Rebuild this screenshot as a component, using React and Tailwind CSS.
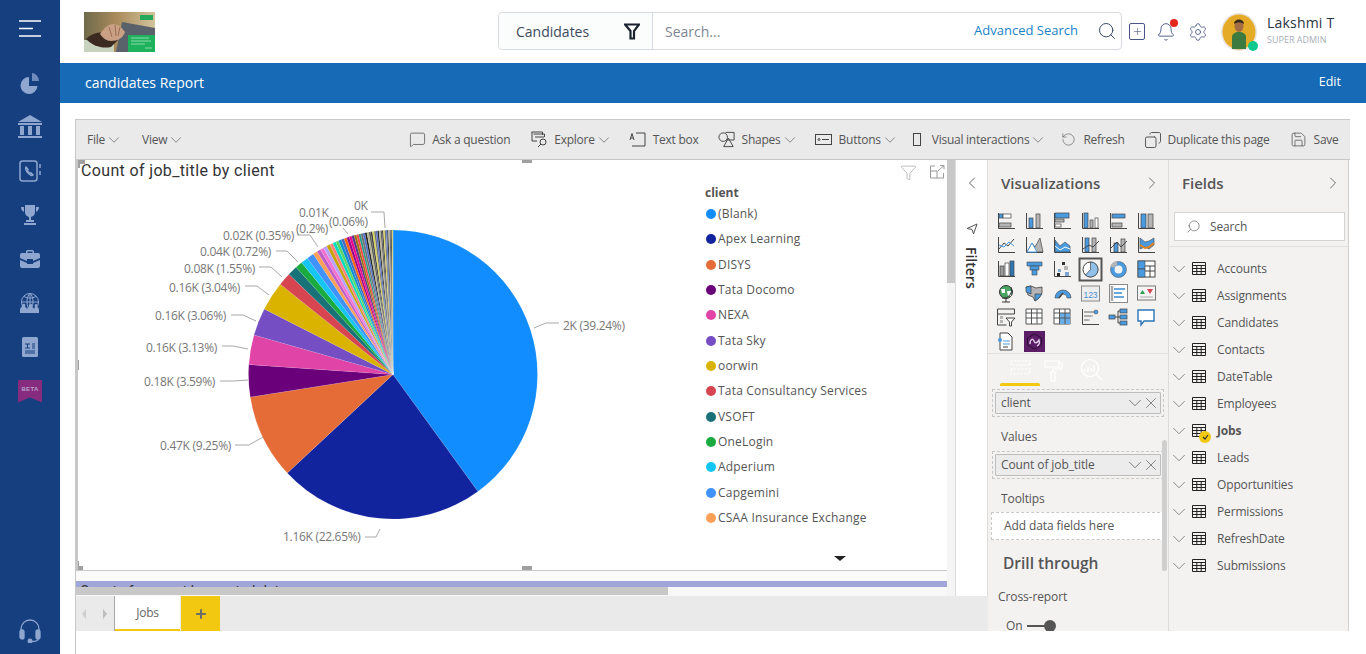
import { ChevronDown, ChevronLeft, ChevronRight, X, Search, Filter, Bell, Settings, MessageSquare, Copy, Save, RotateCw, Plus } from "lucide-react";

const font = "font-['Open_Sans','Noto_Sans',sans-serif]";

const palette = ["#BE5DC9", "#F472D0", "#B5A1FF", "#C4A200", "#FF8080", "#00DBBC", "#5BD667", "#0091D5", "#4668C5", "#FF6300", "#99008A", "#EC008C", "#533285", "#99700A", "#FF4141", "#1F9A85", "#25891C", "#0057A2", "#002050", "#C94F0F", "#450F54", "#B60064", "#34124F", "#6A1604"];

const bigSlices = [
  [40, "#118DFF"], [23.06, "#12239E"], [9.44, "#E66C37"], [3.6, "#6B007B"], [3.3, "#E044A7"], [3.1, "#744EC2"], [3.25, "#D9B300"], [1.45, "#D64550"], [1.1, "#197278"], [0.8, "#1AAB40"], [0.8, "#15C6F4"], [0.8, "#4092FF"], [0.5, "#FFA058"],
];

function buildSlices() {
  const out = bigSlices.map(([v, c]) => ({ v, c, thin: false }));
  let used = out.reduce((s, x) => s + x.v, 0);
  let i = 0;
  let size = 0.42;
  while (used < 100) {
    const v = Math.min(size, 100 - used);
    const faded = used > 96.4;
    out.push({ v, c: faded ? ["#3a3a3a", "#d9d24a", "#6a6a6a", "#4668C5", "#1f1f1f", "#b5b58a", "#555555"][i % 7] : palette[i % palette.length], thin: faded });
    used += v;
    size = Math.max(0.085, size * 0.965);
    i++;
  }
  return out;
}

function PieSlices() {
  const cx = 393, cy = 374.5, r = 144.5;
  let a = 0;
  return buildSlices().map((s, i) => {
    const a1 = a + (s.v / 100) * Math.PI * 2;
    const p0 = [cx + r * Math.sin(a), cy - r * Math.cos(a)];
    const p1 = [cx + r * Math.sin(a1), cy - r * Math.cos(a1)];
    a = a1;
    return (
      <path key={i} d={`M${cx} ${cy}L${p0[0]} ${p0[1]}A${r} ${r} 0 0 1 ${p1[0]} ${p1[1]}Z`} fill={s.c} stroke="#fff" strokeWidth={s.thin ? 0.12 : 0.1} />
    );
  });
}

const labels = [
  ["2K (39.24%)", 563, 326, "534,328 546,323 559,323"],
  ["1.16K (22.65%)", 283, 537, "365,537 376,537 380,529"],
  ["0.47K (9.25%)", 160, 446, "235,445 249,445 263,437"],
  ["0.18K (3.59%)", 144, 382, "220,381 234,381 248,380"],
  ["0.16K (3.13%)", 146, 348, "222,346 233,346 248,349"],
  ["0.16K (3.06%)", 155, 316, "231,315 243,315 256,321"],
  ["0.16K (3.04%)", 169, 288, "245,286 257,286 269,295"],
  ["0.08K (1.55%)", 184, 269, "259,267 271,267 282,277"],
  ["0.04K (0.72%)", 200, 252, "276,251 287,251 298,262"],
  ["0.02K (0.35%)", 223, 236, "297,235 310,235 318,247"],
  ["0.01K", 299, 213, ""],
  ["(0.2%)", 296, 229, ""],
  ["(0.06%)", 329, 222, "343,228 348,234"],
  ["0K", 354, 206, "371,212 384,212 385,228"],
];

const legend = ["(Blank)", "Apex Learning", "DISYS", "Tata Docomo", "NEXA", "Tata Sky", "oorwin", "Tata Consultancy Services", "VSOFT", "OneLogin", "Adperium", "Capgemini", "CSAA Insurance Exchange"];
const legendColors = ["#118DFF", "#12239E", "#E66C37", "#6B007B", "#E044A7", "#744EC2", "#D9B300", "#D64550", "#197278", "#1AAB40", "#15C6F4", "#4092FF", "#FFA058"];

const fields = ["Accounts", "Assignments", "Candidates", "Contacts", "DateTable", "Employees", "Jobs", "Leads", "Opportunities", "Permissions", "RefreshDate", "Submissions"];

function TableIcon() {
  return (
    <svg width="14" height="13" viewBox="0 0 14 13" fill="none" stroke="#222" strokeWidth="1">
      <path d="M.5.5h13v12H.5zM.5 3.5h13M.5 6.500h13M.5 9.500h13M4.800 3.500v9M9.200 3.500v9" />
    </svg>
  );
}

const dk = "#444";
const bl = "#4a9ae0";
const gr = "#b5b5b5";
const Axis = () => <path d="M1.500 1v15.500H18" fill="none" stroke={dk} />;
const Bx = ({ x, y, w, h, c = bl }) => <rect x={x} y={y} width={w} height={h} fill={c} stroke={dk} strokeWidth=".7" />;
const Ln = ({ d, c = dk }) => <path d={d} fill="none" stroke={c} strokeWidth="1" />;

const vizIcons = [
  <><Axis /><Bx x="2" y="2" w="4" h="4" /><Bx x="6" y="2" w="8" h="4" c="#fff" /><Bx x="2" y="11" w="12" h="4" c={gr} /></>,
  <><Axis /><Bx x="4" y="6" w="4" h="10" /><Bx x="11" y="2" w="4" h="14" c={gr} /></>,
  <><Axis /><Bx x="2" y="1" w="14" h="5" /><Bx x="2" y="7" w="9" h="3" c={gr} /><Bx x="2" y="12" w="6" h="3" c="#fff" /></>,
  <><Axis /><Bx x="3" y="1" w="4" h="15" /><Bx x="9" y="8" w="3" h="8" c={gr} /><Bx x="14" y="6" w="3" h="10" c="#fff" /></>,
  <><Axis /><Bx x="3" y="2" w="13" h="4" /><Bx x="3" y="11" w="10" h="4" c={gr} /></>,
  <><Axis /><Bx x="4" y="2" w="5" h="14" /><Bx x="11" y="2" w="5" h="14" c={gr} /></>,
  <><Axis /><Ln d="M2 13l5-6 4 3 6-7" /><Ln d="M2 9l5 2 5-5 5 4" c={bl} /></>,
  <><Axis /><path d="M2 16l5-9 3 4 5-9 3 14z" fill={gr} stroke={dk} strokeWidth=".7" /><path d="M2 16l5-9 5 9z" fill="#fff" stroke={bl} /></>,
  <><Axis /><path d="M2 4l5 6 5-4 5 4v6H2z" fill={bl} stroke={dk} strokeWidth=".6" /><path d="M2 10l5 4 5-3 5 2" fill="none" stroke="#fff" /></>,
  <><Axis /><Bx x="4" y="2" w="4" h="14" /><Bx x="11" y="2" w="4" h="14" c={gr} /><Ln d="M2 13l6-4 4 2 6-6" /></>,
  <><Axis /><Bx x="5" y="7" w="4" h="9" /><Bx x="12" y="3" w="4" h="13" c={gr} /><Ln d="M2 12l6-6 4 5 6-6" /></>,
  <><Axis /><path d="M3 2l5 4 4-1 5-3v7l-5 4-4-2-5 2z" fill={bl} stroke={dk} strokeWidth=".6" /><path d="M3 9l5 3 4-1 5-4" fill="none" stroke="#e6801e" strokeWidth="2" /></>,
  <><Axis /><Bx x="3" y="6" w="4" h="10" c="#999" /><Bx x="8" y="3" w="4" h="13" c="#fff" /><Bx x="13" y="1" w="4" h="15" c="#2e75b6" /></>,
  <><path d="M2 2h15v4H2z" fill={bl} stroke={dk} strokeWidth=".6" /><path d="M5 6h9v4H5z" fill={bl} stroke={dk} strokeWidth=".6" /><path d="M7 10h5v5H7z" fill={bl} stroke={dk} strokeWidth=".6" /></>,
  <><Axis /><rect x="5" y="9" width="3" height="3" fill="#7aa6d0" /><rect x="11" y="6" width="4" height="4" fill={gr} /><rect x="4" y="13" width="3" height="3" fill="#222" /><rect x="12" y="12" width="4" height="4" fill="#7aa6d0" /><rect x="9" y="2" width="3" height="3" fill="#333" /></>,
  <><rect x="-1.500" y="-1.500" width="22" height="22" fill="none" stroke="#555" strokeWidth="2" /><circle cx="9.500" cy="9.500" r="7.500" fill="#fff" stroke={dk} /><path d="M9.500 2a7.500 7.500 0 0 1 0 15 7 7 0 0 1-5-2l5-5.500z" fill="#8fc0ea" stroke={dk} strokeWidth=".7" /></>,
  <><circle cx="9.500" cy="9.500" r="6" fill="none" stroke={bl} strokeWidth="4" /><circle cx="9.500" cy="9.500" r="8" fill="none" stroke={dk} strokeWidth=".5" /><path d="M3 7a7 7 0 0 1 5-4" stroke={gr} strokeWidth="4" fill="none" /></>,
  <><rect x="1" y="1" width="17" height="16" fill="#fff" stroke={dk} /><rect x="1" y="1" width="7" height="8" fill={bl} stroke={dk} strokeWidth=".6" /><rect x="1" y="9" width="7" height="8" fill={bl} stroke={dk} strokeWidth=".6" /><path d="M8 6h10M13 6v11M8 11h10" stroke={dk} /></>,
  <><circle cx="9" cy="8" r="6.500" fill="#4aa564" stroke="#333" /><path d="M4 5h4v4H5zM10 7h4v5h-3z" fill="#fff" /><path d="M14 3a8 8 0 0 1-9 11M9 15v3M5 18h8" fill="none" stroke="#333" /></>,
  <><path d="M1 3l5-1 5 2 6-1v6l-3 5-4 3-2-4-5-2z" fill={gr} stroke={dk} strokeWidth=".8" /><path d="M1 3l5-1v8L1 8zM10 10h7l-3 4-4 3z" fill={bl} stroke={dk} strokeWidth=".7" /></>,
  <><path d="M2 14a8 8 0 0 1 16 0h-4a4 4 0 0 0-8 0z" fill={bl} stroke={dk} strokeWidth=".6" /><path d="M6 14l4-5" stroke={dk} strokeWidth="1.400" /></>,
  <><rect x="0.500" y="2" width="18" height="15" fill="#ededed" stroke="#888" /><text x="9.500" y="14" textAnchor="middle" fontSize="8.500" fill="#4a8fd0" fontFamily="Liberation Sans">123</text></>,
  <><rect x="0.500" y="0.500" width="18" height="18" fill="#fff" stroke="#888" /><path d="M3 2v15" stroke="#aaa" strokeWidth="2.500" /><path d="M5 5h11M5 9h8M5 13h10" stroke="#3c8ad0" strokeWidth="1.600" /></>,
  <><rect x="0.500" y="2" width="18" height="14" fill="#f4f4f4" stroke="#777" /><path d="M3 10l2.500-4L8 10z" fill="#2a9d4a" /><path d="M10 5h6l-3 5z" fill="#d9434f" /><path d="M3 13h13" stroke="#aaa" /></>,
  <><path d="M.5 1h17v5H.5zM.5 6v11h9" fill="none" stroke={dk} /><rect x="3" y="8" width="3" height="3" fill={gr} /><rect x="3" y="12" width="3" height="3" fill={gr} /><path d="M9 10h9l-3.500 4v4h-2v-4z" fill="#fff" stroke={dk} /></>,
  <><path d="M1 1h16v15H1zM1 5h16M1 10h16M6.500 1v15M12 1v15" fill="#fff" stroke="#555" /></>,
  <><path d="M1 1h16v15H1z" fill="#fff" stroke="#555" /><path d="M7 5h10v11H7z" fill="#6aaee8" /><path d="M1 5h16M1 10h16M6.500 1v15M12 1v15" stroke="#555" /></>,
  <><Axis /><path d="M3 4h11M3 8h7M3 12h4" stroke="#666" /><circle cx="15" cy="4" r="2" fill={bl} stroke={dk} strokeWidth=".5" /><circle cx="11" cy="8" r="1" fill={gr} /><circle cx="8" cy="12" r="1" fill={gr} /></>,
  <><Bx x="0" y="7" w="6" h="4" /><Bx x="11" y="1" w="7" h="4" /><Bx x="11" y="7" w="7" h="4" /><Bx x="11" y="13" w="7" h="4" /><Ln d="M6 9h5M9 3v12h2M9 3h2" /></>,
  <><path d="M1 2h16v11H7l-3 4v-4H1z" fill="#fff" stroke="#2c76b8" strokeWidth="1.400" /></>,
  <><path d="M3 1h8l4 4v13H3z" fill="#fff" stroke={dk} /><circle cx="3" cy="8" r="2" fill={bl} /><path d="M6 9h7M6 12h7" stroke={bl} /><path d="M6 15h5" stroke={dk} /></>,
  <><rect x="-1" y="-1" width="21" height="21" fill="#5a1d66" /><path d="M9.500 2l7 4v7l-7 4-7-4V6z" fill="none" stroke="#2b1033" /><path d="M5 12c0-5 3-6 4-3s3 2 5-1c1 3 0 5-2 6" fill="none" stroke="#ddc8e4" strokeWidth="1.400" /></>,
];

function ToolItem({ icon, label, chevron, className = "" }) {
  return (
    <div className={`flex items-center shrink-0 ${className}`}>
      {icon && <span className="flex items-center justify-center w-[18px] h-[18px] mr-[6px]">{icon}</span>}
      <span className="whitespace-nowrap">{label}</span>
      {chevron && <ChevronDown size={18} strokeWidth={0.9} />}
    </div>
  );
}

function SideIcon({ children }) {
  return <div className="h-[44px] w-full shrink-0 flex items-center justify-center">{children}</div>;
}

function Sidebar() {
  const c = "#8fa6cf";
  return (
    <div className="w-[60px] shrink-0 bg-[#163f80] flex flex-col items-center">
      <svg width="22" height="18" viewBox="0 0 22 18" className="mt-[20px] mb-[23px]" stroke="#fff" strokeWidth="1.600">
        <path d="M0 1h22M0 8.500h14M0 16h22" />
      </svg>
      <SideIcon>
        <svg width="20" height="21" viewBox="0 0 20 21" fill={c}>
          <path d="M9 4a8.500 8.500 0 1 0 8.500 9H9z" />
          <path d="M12 0a8 8 0 0 1 7 8h-7z" opacity=".75" />
        </svg>
      </SideIcon>
      <SideIcon>
        <svg width="24" height="24" viewBox="0 0 24 24" fill={c}>
          <path d="M12 0l12 7H0zM0 8h24v2H0zM2 11h4v9H2zM10 11h4v9h-4zM18 11h4v9h-4zM0 21h24v2H0z" />
        </svg>
      </SideIcon>
      <SideIcon>
        <svg width="22" height="22" viewBox="0 0 22 22" fill="none" stroke={c} strokeWidth="1.500">
          <rect x="1" y="1" width="17" height="20" rx="2.500" />
          <path d="M7 7c-1 1 0 4 2 6s4 3 5 2l-2-2-1 .5L8.500 11l.5-1.500z" />
          <path d="M21 4v4M21 11v4" />
        </svg>
      </SideIcon>
      <SideIcon>
        <svg width="18" height="20" viewBox="0 0 18 20" fill={c}>
          <path d="M4 0h10v7a5 5 0 0 1-4 5v3h3v2H5v-2h3v-3a5 5 0 0 1-4-5zM3 2v5C1 6 0 4 0 2zM15 2h3c0 2-1 4-3 5zM3 18h12v2H3z" />
        </svg>
      </SideIcon>
      <SideIcon>
        <svg width="20" height="18" viewBox="0 0 20 18" fill={c}>
          <path d="M6 3V1.500A1.500 1.500 0 0 1 7.500 0h5A1.500 1.500 0 0 1 14 1.500V3h4a2 2 0 0 1 2 2v3l-7 3V9H7v2L0 8V5a2 2 0 0 1 2-2zm1.500 0h5V1.500h-5zM0 10l7 3v1h6v-1l7-3v6a2 2 0 0 1-2 2H2a2 2 0 0 1-2-2z" />
        </svg>
      </SideIcon>
      <SideIcon>
        <svg width="20" height="20" viewBox="0 0 20 20" fill="none" stroke={c} strokeWidth="1">
          <circle cx="10" cy="9" r="8.500" />
          <path d="M1.500 9h17M10 .5v17M4 3.500c4 2 8 2 12 0M10 .5c-4 3-4 13 0 17M10 .5c4 3 4 13 0 17" />
          <path d="M0 20v-3c0-2 1-3 2-3 0 0-1-2 1-3s3 1 2 3c1 0 2 1 2 3 0-2 1-3 2-3 0 0-1-2 1-3s3 1 2 3c1 0 2 1 2 3 0-2 1-3 1-3-1-2 0-3 1-3s2 1 1 3c1 0 2 1 2 3v3z" fill={c} stroke="none" />
        </svg>
      </SideIcon>
      <SideIcon>
        <svg width="16" height="20" viewBox="0 0 16 20">
          <rect width="16" height="20" rx="1.500" fill={c} />
          <path d="M3 7h5M5.500 7v4M3 11h5M10 7h3M10 9h3M10 11h3M3 14h10M3 16h10" stroke="#163f80" strokeWidth="1" />
        </svg>
      </SideIcon>
      <SideIcon>
        <div className="w-[24px] h-[23px] bg-[#862b7d] [clip-path:polygon(0_0,100%_0,100%_100%,50%_78%,0_100%)] flex justify-center pt-[6px] text-[6px] leading-[7px] font-bold tracking-[.3px] text-[#b9a2cf] font-['Liberation_Sans',sans-serif]">
          BETA
        </div>
      </SideIcon>
      <div className="mt-auto mb-[11px]">
        <svg width="22" height="24" viewBox="0 0 22 24" fill="none" stroke={c} strokeWidth="1.300">
          <path d="M2 12V10a9 9 0 0 1 18 0v2" />
          <rect x="1" y="11" width="4" height="9" rx="2" fill={c} />
          <rect x="17" y="11" width="4" height="9" rx="2" fill={c} />
          <path d="M19 20c0 2-3 2.500-6 2.500" />
          <circle cx="11" cy="22" r="1.800" fill={c} />
        </svg>
      </div>
    </div>
  );
}

function TopBar() {
  return (
    <div className="h-[63px] shrink-0 flex items-center bg-white">
      <svg width="71" height="40" viewBox="0 0 71 40" className="ml-[24px] shrink-0">
        <defs>
          <linearGradient id="logoTop" x1="0" x2="1" y1="0" y2="0">
            <stop offset="0" stopColor="#6f6a4a" />
            <stop offset=".45" stopColor="#a98a5c" />
            <stop offset="1" stopColor="#d2c49c" />
          </linearGradient>
        </defs>
        <rect width="71" height="40" fill="url(#logoTop)" />
        <rect y="28" width="30" height="12" fill="#c9d2bd" />
        <path d="M38 10l33 6v24H32z" fill="#59616b" />
        <path d="M2 27c6-6 14-8 22-6l10 7-7 7c-9 2-18-1-25-8z" fill="#3b2a20" />
        <path d="M16 22c4-6 8-10 14-10l6 2 5 6c-2 6-7 9-14 9-5 0-8-3-11-7z" fill="#c9a084" />
        <path d="M25 15l3 10M31 13l1 11M36 15l-2 9" stroke="#8e6248" strokeWidth=".8" />
        <rect x="56" y="3" width="13" height="5" fill="#24a85a" />
        <rect x="44" y="23" width="27" height="17" fill="#1fb25c" />
        <path d="M47 26h18M47 29h20M47 32h14M61 36h7" stroke="#a8e6c0" strokeWidth=".8" />
      </svg>
      <div className="ml-[343px] -mt-[1px] w-[624px] h-[38px] flex border border-[#d8dbe0] rounded-[4px] shrink-0">
        <div className="w-[154px] bg-[#fbfcfc] border-r border-[#d8dbe0] flex items-center justify-between pl-[17px] pr-[12px] text-[14px] text-[#3d4a5c] rounded-l-[4px]">
          <span>Candidates</span>
          <svg width="16" height="17" viewBox="0 0 16 17" fill="none" stroke="#1a2230" strokeWidth="2.200">
            <path d="M1 1.500h14L10 8v7.500H6.500V8z" />
          </svg>
        </div>
        <div className="flex-1 flex items-center pl-[12px] pr-[4px] text-[14px] text-[#7d8693]">
          <span>Search...</span>
          <span className="ml-auto text-[13px] text-[#1a82c9]">Advanced Search</span>
          <Search size={20} strokeWidth={1.200} className="ml-[19px] text-[#3b4a66]" />
        </div>
      </div>
      <span className="ml-[7px] w-[16px] h-[17px] border border-[#4a5585] rounded-[2px] flex items-center justify-center shrink-0">
        <Plus size={11} strokeWidth={1.300} className="text-[#4a5585]" />
      </span>
      <span className="relative ml-[11px] shrink-0 text-[#4a5585]">
        <Bell size={20} strokeWidth={1.100} />
        <span className="absolute -top-[3px] right-[-2px] w-[8px] h-[8px] rounded-full bg-[#e5261c]" />
      </span>
      <Settings size={20} strokeWidth={1.100} className="ml-[12px] shrink-0 text-[#56648a]" />
      <div className="relative ml-[13px] shrink-0 w-[36px] h-[38px]">
        <svg width="36" height="38" viewBox="0 0 36 38">
          <ellipse cx="18" cy="19" rx="18" ry="19" fill="#e8e4dc" />
          <ellipse cx="18" cy="19" rx="16.500" ry="17.500" fill="#e6ab26" />
          <path d="M11 36V24c0-3 3-5 7-5s7 2 7 5v12z" fill="#3d7a3f" />
          <ellipse cx="18" cy="13" rx="4.500" ry="6" fill="#a56d45" />
          <path d="M13 11c0-6 10-6 10 0-3-2-7-2-10 0z" fill="#3a2a1c" />
        </svg>
        <span className="absolute right-[-1px] bottom-[0px] w-[10px] h-[10px] rounded-full bg-[#0fc88f]" />
      </div>
      <div className="ml-[10px] shrink-0 flex flex-col -mt-[3px]">
        <span className="text-[14px] leading-[18px] font-medium tracking-[.2px] text-[#2a3342]">Lakshmi T</span>
        <span className="text-[9px] leading-[12px] text-[#a9afba] mt-[2px]">SUPER ADMIN</span>
      </div>
    </div>
  );
}

function Toolbar() {
  const ic = { strokeWidth: 1.100, size: 17 };
  return (
    <div className="h-[40px] shrink-0 bg-[#eaeaea] border-b border-[#c8c8c8] flex items-center text-[12px] text-[#555] tracking-[-0.25px]">
      <ToolItem label="File" chevron className="ml-[11px]" />
      <ToolItem label="View" chevron className="ml-[19px]" />
      <ToolItem icon={<MessageSquare {...ic} />} label="Ask a question" className="ml-[223px]" />
      <ToolItem
        icon={
          <svg width="17" height="17" viewBox="0 0 17 17" fill="none" stroke="#444">
            <path d="M.5 1h11v3M2.500 3h11v3M1 1v9h5M4 6h9" />
            <circle cx="12" cy="11" r="3" />
            <path d="M10 13l-3 3" />
          </svg>
        }
        label="Explore"
        chevron
        className="ml-[20px]"
      />
      <ToolItem
        icon={
          <svg width="17" height="15" viewBox="0 0 17 15" fill="none" stroke="#444">
            <path d="M7 1h9v13H3M1 8l2-6.500L5 8M1.800 6h2.400" />
          </svg>
        }
        label="Text box"
        className="ml-[16px]"
      />
      <ToolItem
        icon={
          <svg width="19" height="17" viewBox="0 0 19 17" fill="none" stroke="#444">
            <circle cx="5.500" cy="6" r="4.500" />
            <path d="M8 1h9v8H9M11 7l5 9H6z" />
          </svg>
        }
        label="Shapes"
        chevron
        className="ml-[19px]"
      />
      <ToolItem
        icon={
          <svg width="17" height="11" viewBox="0 0 17 11" fill="none" stroke="#444">
            <rect x=".5" y=".5" width="16" height="10" />
            <circle cx="4" cy="5.500" r="1" />
            <path d="M7 5.500h7" />
          </svg>
        }
        label="Buttons"
        chevron
        className="ml-[16px]"
      />
      <ToolItem
        icon={
          <svg width="8" height="13" viewBox="0 0 8 13" fill="none" stroke="#444">
            <rect x=".5" y=".5" width="7" height="12" />
          </svg>
        }
        label="Visual interactions"
        chevron
        className="ml-[9px]"
      />
      <ToolItem icon={<RotateCw size={15} strokeWidth={1} className="-scale-x-100" />} label="Refresh" className="ml-[12px]" />
      <ToolItem icon={<Copy strokeWidth={1.300} size={18} className="-scale-x-100" />} label="Duplicate this page" className="ml-[19px]" />
      <ToolItem icon={<Save {...ic} />} label="Save" className="ml-[20px]" />
    </div>
  );
}

function Handle({ className }) {
  return <span className={`absolute bg-[#a0a0a0] ${className}`} />;
}

function ReportVisual() {
  return (
    <div className="relative h-[411px] shrink-0 bg-white border-l-2 border-b border-[#c8c8c8] overflow-hidden">
      <Handle className="left-[-2px] top-0 w-[9px] h-[4px]" />
      <Handle className="left-[-2px] top-0 w-[4px] h-[8px]" />
      <Handle className="left-[444px] top-0 w-[10px] h-[3px]" />
      <Handle className="left-[444px] bottom-0 w-[10px] h-[4px]" />
      <Handle className="left-[-2px] top-[200px] w-[3px] h-[10px]" />
      <Handle className="left-[-2px] bottom-0 w-[7px] h-[4px]" />
      <Handle className="left-[-2px] bottom-0 w-[3px] h-[9px]" />
      <div className="flex items-center justify-between h-[20px] pl-[3px] pr-[2px]">
        <span className="mt-[1px] text-[16px] tracking-[.35px] text-[#333] font-['Roboto',sans-serif]">Count of job_title by client</span>
        <span className="flex items-center gap-[13px] mt-[4px] text-[#999]">
          <Filter size={17} strokeWidth={0.9} />
          <svg width="15" height="14" viewBox="0 0 15 14" fill="none" stroke="#999">
            <path d="M5 1H.5v12h13V8M8 6l6-5.500M10 .5h4v4M.5 6H7v7" />
          </svg>
        </span>
      </div>
      <div className="flex">
        <svg width="626" height="391" viewBox="78 180 626 391" className="shrink-0 block">
          <PieSlices />
          {labels.map(([t, x, y, pts]) => (
            <g key={t}>
              <text x={x} y={y + 4} fontSize="12" letterSpacing="-.3" fill="#777" fontFamily="Open Sans, sans-serif">{t}</text>
              {pts && <polyline points={pts} fill="none" stroke="#a8a8a8" strokeWidth="1" />}
            </g>
          ))}
        </svg>
        <div className="relative flex-1 pt-[4px] text-[12px] text-[#555] tracking-[.2px]">
          <div className="font-bold leading-[18px] ml-[1px] mb-[3px] tracking-normal">client</div>
          <div className="flex flex-col gap-[7.330px]">
            {legend.map((name, i) => (
              <div key={name} className="flex items-center h-[18px] whitespace-nowrap">
                <span className="w-[10px] h-[10px] rounded-full mx-[2px] shrink-0" style={{ background: legendColors[i] }} />
                <span>{name}</span>
              </div>
            ))}
          </div>
          <span className="absolute left-[130px] top-[376px] w-0 h-0 border-x-[6px] border-x-transparent border-t-[5px] border-t-[#222]" />
        </div>
      </div>
    </div>
  );
}

function CanvasArea() {
  return (
    <div className="flex-1 min-w-0 flex flex-col bg-[#fafafa]">
      <ReportVisual />
      <div className="h-[10px] shrink-0 bg-[#fafafa]" />
      <div className="h-[6px] shrink-0 bg-[#a0a6d8] overflow-hidden text-[14px] leading-[20px] text-[#333] pl-[4px] font-['Roboto',sans-serif]">
        <span aria-hidden="true" className="block h-[6px] overflow-hidden">Count of account by created date</span>
      </div>
      <div className="h-[9px] shrink-0 bg-[#f8f8f8]">
        <div className="h-[8px] w-[592px] bg-[#c8c8c8]" />
      </div>
    </div>
  );
}

function FilterStrip() {
  return (
    <div className="w-[33px] shrink-0 bg-white border-l border-r border-[#dcdcdc] flex flex-col items-center text-[#444]">
      <ChevronLeft size={20} strokeWidth={1} className="mt-[13px]" />
      <svg width="12" height="12" viewBox="0 0 12 12" fill="none" stroke="#555" className="mt-[30px]">
        <path d="M1 5.500L11 1 7.500 11 6 6.500z" />
      </svg>
      <span className="mt-[12px] text-[14px] font-semibold [writing-mode:vertical-rl] text-[#333]">Filters</span>
    </div>
  );
}

function WellField({ label }) {
  return (
    <div className="mx-[4px] border border-dashed border-[#c8c8c8] p-[2px]">
      <div className="h-[22px] bg-[#ececec] border border-[#bdbdbd] rounded-[1px] flex items-center pl-[5px] text-[#555]">
        <span>{label}</span>
        <ChevronDown size={22} strokeWidth={0.8} className="ml-auto" />
        <X size={18} strokeWidth={0.9} className="-ml-[4px]" />
      </div>
    </div>
  );
}

function VizPane() {
  return (
    <div className="relative w-[181px] shrink-0 bg-[#f3f2f1] border-r border-[#dcdcdc] overflow-hidden text-[12px] text-[#555] tracking-[-0.1px]">
      <div className="h-[46px] flex items-center justify-between pl-[13px] pr-[6px] text-[#555]">
        <span className="text-[15px] font-semibold tracking-normal">Visualizations</span>
        <ChevronRight size={20} strokeWidth={1} />
      </div>
      <div className="ml-[9px] mt-[3px] grid grid-cols-[repeat(6,28px)] auto-rows-[24px]">
        {vizIcons.map((ic, i) => (
          <span key={i} className="flex items-center justify-center w-[19px] h-[24px]">
            <svg width="19" height="19" viewBox="0 0 19 19" className="overflow-visible">{ic}</svg>
          </span>
        ))}
      </div>
      <div className="border-t border-[#e0e0e0] h-[33px] flex items-center pl-[12px] relative">
        <svg width="40" height="24" viewBox="0 0 40 24" fill="none" stroke="#fff" strokeWidth="1.200">
          <path d="M11 3h19v4H11zM11 11h19v5H11z" strokeDasharray="2 1.500" />
        </svg>
        <svg width="22" height="24" viewBox="0 0 22 24" fill="none" stroke="#fff" strokeWidth="1.200" className="ml-[2px]">
          <path d="M3 3h14v6H3zM17 5h3v6h-9v3M9 14h4v9H9z" />
        </svg>
        <svg width="24" height="24" viewBox="0 0 24 24" fill="none" stroke="#fff" strokeWidth="1.200" className="ml-[16px]">
          <circle cx="10" cy="10" r="8.500" />
          <path d="M16 16l6 6M5 14v-3M8 14V9M11 14v-4M14 14V7" />
        </svg>
        <span className="absolute left-[12px] bottom-0 w-[40px] h-[3px] rounded-t-[2px] bg-[#f2c811]" />
      </div>
      <div className="pt-[3px]">
        <WellField label="client" />
        <div className="h-[18px] leading-[18px] mt-[11px] mb-[5px] ml-[13px]">Values</div>
        <WellField label="Count of job_title" />
        <div className="h-[18px] leading-[18px] mt-[11px] mb-[4px] ml-[13px]">Tooltips</div>
        <div className="mx-[3px] h-[28px] bg-white border border-dashed border-[#c8c8c8] flex items-center pl-[12px]">Add data fields here</div>
        <div className="ml-[15px] mt-[13px] text-[15.500px] leading-[20px] font-semibold tracking-normal">Drill through</div>
        <div className="ml-[10px] mt-[15px] leading-[18px]">Cross-report</div>
        <div className="ml-[18px] mt-[14px] h-[12px] leading-[12px] flex items-center">
          <span>On</span>
          <span className="ml-[4px] w-[18px] h-[2px] bg-[#555]" />
          <span className="w-[12px] h-[12px] rounded-full bg-[#555] -ml-[1px]" />
        </div>
      </div>
      <span className="absolute right-[1px] top-[280px] w-[5px] h-[131px] rounded-[3px] bg-[#cfcfcf]" />
    </div>
  );
}

function FieldsPane() {
  return (
    <div className="w-[180px] shrink-0 bg-[#f3f2f1] border-r border-[#d0d0d0] text-[12px] text-[#555] tracking-[-0.15px]">
      <div className="h-[46px] flex items-center justify-between pl-[13px] pr-[5px]">
        <span className="text-[15px] font-semibold tracking-normal">Fields</span>
        <ChevronRight size={20} strokeWidth={1} />
      </div>
      <div className="ml-[5px] mr-[3px] mt-[6px] h-[29px] bg-white border border-[#d4d4d4] flex items-center pl-[11px] text-[#555]">
        <Search size={15} strokeWidth={1} className="-scale-x-100" />
        <span className="ml-[9px]">Search</span>
      </div>
      <div className="mt-[5px] border-t border-[#e0e0e0] pt-[8px]">
        {fields.map((f) => (
          <div key={f} className="h-[27px] flex items-center">
            <ChevronDown size={22} strokeWidth={0.8} className="-ml-[1px] text-[#666]" />
            <span className="relative ml-[2px] flex">
              <TableIcon />
              {f === "Jobs" && (
                <span className="absolute left-[7px] top-[7px] w-[12px] h-[12px] rounded-full bg-[#f2c811] flex items-center justify-center">
                  <svg width="7" height="6" viewBox="0 0 7 6" fill="none" stroke="#333" strokeWidth="1.200"><path d="M1 3l2 2 3-4" /></svg>
                </span>
              )}
            </span>
            <span className={`ml-[11px] ${f === "Jobs" ? "font-bold" : ""}`}>{f}</span>
          </div>
        ))}
      </div>
    </div>
  );
}

function TabBar() {
  return (
    <div className="h-[35px] shrink-0 bg-[#eaeaea] flex">
      <div className="w-[39px] border-r border-[#a8a8a8] flex items-center gap-[17px] pl-[6px]">
        <span className="w-0 h-0 border-y-[5px] border-y-transparent border-r-[4px] border-r-[#cfcfcf]" />
        <span className="w-0 h-0 border-y-[5px] border-y-transparent border-l-[4px] border-l-[#bdbdbd]" />
      </div>
      <div className="w-[65px] h-full bg-white border-b-2 border-[#f2c811] flex items-center justify-center text-[12px] text-[#666] tracking-[-0.2px]">Jobs</div>
      <div className="ml-[1px] w-[39px] bg-[#f2c811] flex items-center justify-center">
        <Plus size={14} strokeWidth={3.500} className="text-[#6d6d6d]" />
      </div>
    </div>
  );
}

export default function App() {
  return (
    <div className={`h-[654px] w-full flex overflow-hidden bg-white ${font}`}>
      <Sidebar />
      <div className="flex-1 min-w-0 flex flex-col">
        <TopBar />
        <div className="h-[40px] shrink-0 bg-[#176ab5] flex items-center justify-between pl-[25px] pr-[25px] pb-[1px] text-white">
          <span className="text-[14px]">candidates Report</span>
          <span className="text-[12.500px]">Edit</span>
        </div>
        <div className="flex-1 min-h-0 pl-[15px] pr-[16px] pt-[16px]">
          <div className="h-full border-t border-l border-[#c8c8c8] flex flex-col">
            <Toolbar />
            <div className="flex h-[471px] shrink-0">
              <div className="w-[912px] shrink-0 flex flex-col">
                <div className="flex h-[436px] shrink-0">
                  <CanvasArea />
                  <div className="w-[8px] shrink-0 bg-[#f5f5f5]">
                    <div className="h-[123px] bg-[#c8c8c8]" />
                  </div>
                  <FilterStrip />
                </div>
                <TabBar />
              </div>
              <VizPane />
              <FieldsPane />
            </div>
          </div>
        </div>
      </div>
    </div>
  );
}
